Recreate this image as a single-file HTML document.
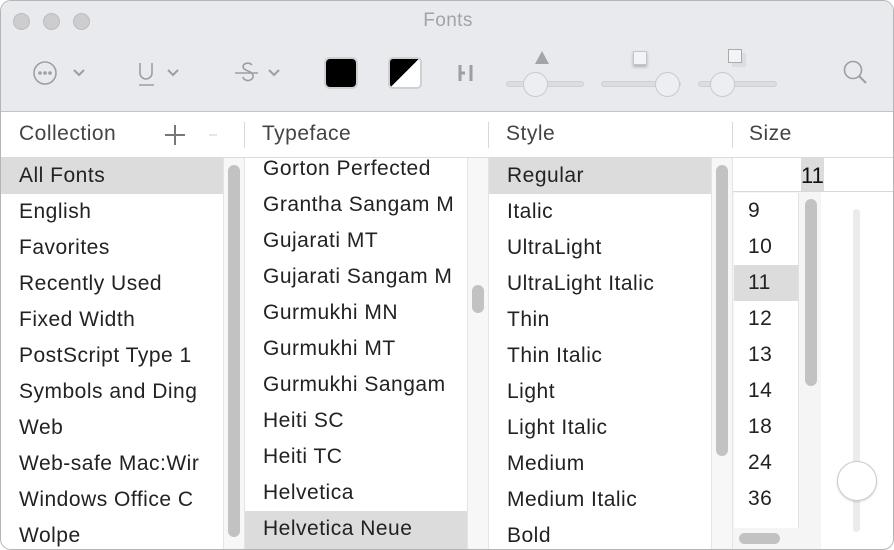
<!DOCTYPE html>
<html><head><meta charset="utf-8"><style>
*{margin:0;padding:0;box-sizing:border-box}
body{width:894px;height:550px;background:#fff;overflow:hidden;font-family:"Liberation Sans",Helvetica,Arial,sans-serif}
.win{position:absolute;left:0;top:0;width:894px;height:550px;border:1px solid #b5b5b5;border-radius:11px;overflow:hidden;background:#fff}
.tb{position:absolute;left:0;top:0;width:894px;height:111px;background:#e9eaee;border-bottom:1px solid #c4c4c6}
.tl{position:absolute;top:12px;width:17px;height:17px;border-radius:50%;background:#cdcdcf;border:1px solid #bdbdbf}
.title{position:absolute;left:0;width:894px;top:9px;text-align:center;color:#a3a3a5;font-size:19px;letter-spacing:.4px}
.a{position:absolute}
.hd{position:absolute;top:121px;font-size:21px;letter-spacing:.5px;color:#444}
.sep{position:absolute;top:121px;width:1px;height:26px;background:#d8d8d8}
.list{position:absolute;top:157px;font-size:21px;letter-spacing:.5px;color:#222}
.row{height:36px;line-height:36px;padding-left:18px;white-space:nowrap;overflow:hidden}
.sel{background:#dcdcdc}
.track{position:absolute;top:157px;width:22px;height:393px;background:#f7f7f7;border-left:1px solid #e4e4e4;border-right:1px solid #e4e4e4}
.thumb{position:absolute;width:12px;left:4px;border-radius:6px;background:#c2c2c2}
.knob{position:absolute;border-radius:50%;background:#eceef1;border:1.5px solid #c9cacd}
.strk{position:absolute;height:6px;border-radius:3px;background:#dcdde0;border:1px solid #cfd0d3}
</style></head><body><div class="win">
<div class="tb">
<div class="tl" style="left:12px"></div><div class="tl" style="left:42px"></div><div class="tl" style="left:72px"></div>
<div class="title">Fonts</div>
<svg class="a" style="left:0;top:50px" width="894" height="50" viewBox="0 50 894 50" fill="none" stroke="#9d9ea1" stroke-width="1.6">
<circle cx="44" cy="72" r="11"/><circle cx="39" cy="72" r="1" fill="#9d9ea1"/><circle cx="44" cy="72" r="1" fill="#9d9ea1"/><circle cx="49" cy="72" r="1" fill="#9d9ea1"/>
<path d="M73 69l5 5 5-5M167 69l5 5 5-5M268 69l5 5 5-5" stroke-width="2"/>
<path d="M139 62v10a6 6 0 0 0 12 0v-10"/><path d="M138 84h15"/>
<path d="M251 64a5 4 0 0 0-9 1c0 6 10 4 10 10a5 4 0 0 1-10 1M234 72h23"/>
<path d="M459 64v16M470 64v16M459 72h5" stroke-width="3"/>
<circle cx="852" cy="69" r="8.5"/><path d="M858 75l7 7" stroke-width="2"/>
</svg>
<div class="a" style="left:323px;top:56px;width:34px;height:32px;background:#000;border-radius:6px;border:2px solid #cfd0d3"></div>
<div class="a" style="left:387px;top:56px;width:34px;height:32px;border-radius:5px;border:2px solid #cfd0d3;background:linear-gradient(135deg,#000 50%,#fff 50%)"></div>
<svg class="a" style="left:530px;top:47px" width="22" height="18"><path d="M4 16L11 3 18 16z" fill="#a3a4a7"/></svg>
<div class="strk" style="left:505px;top:80px;width:78px"></div><div class="knob" style="left:522px;top:71px;width:25px;height:25px"></div>
<div class="a" style="left:632px;top:50px;width:14px;height:14px;background:#f4f4f6;border:1px solid #c5c6c9;box-shadow:0 2px 3px rgba(0,0,0,.25)"></div>
<div class="strk" style="left:600px;top:80px;width:80px"></div><div class="knob" style="left:654px;top:71px;width:25px;height:25px"></div>
<div class="a" style="left:731px;top:52px;width:14px;height:14px;background:#dcdde0"></div>
<div class="a" style="left:727px;top:48px;width:14px;height:14px;background:#f4f4f6;border:1.5px solid #a9aaad"></div>
<div class="strk" style="left:697px;top:80px;width:79px"></div><div class="knob" style="left:709px;top:71px;width:25px;height:25px"></div>
</div>
<div class="hd" style="left:18px">Collection</div>
<svg class="a" style="left:162px;top:122px" width="60" height="24" stroke="#777" stroke-width="2"><path d="M12 2v20M2 12h20"/><path d="M46 12h8" stroke="#ccc" stroke-width="1"/></svg>
<div class="sep" style="left:243px"></div><div class="hd" style="left:261px">Typeface</div>
<div class="sep" style="left:487px"></div><div class="hd" style="left:505px">Style</div>
<div class="sep" style="left:731px"></div><div class="hd" style="left:748px">Size</div>
<div class="a" style="left:0;top:156px;width:894px;height:1px;background:#dadada"></div>

<div class="list" style="left:0;width:222px">
<div class="row sel">All Fonts</div><div class="row">English</div><div class="row">Favorites</div><div class="row">Recently Used</div><div class="row">Fixed Width</div><div class="row">PostScript Type 1</div><div class="row">Symbols and Ding</div><div class="row">Web</div><div class="row">Web-safe Mac:Wir</div><div class="row">Windows Office C</div><div class="row">Wolpe</div></div>
<div class="track" style="left:222px"><div class="thumb" style="top:7px;height:372px"></div></div>

<div class="list" style="left:244px;width:210px;top:150px">
<div class="row">Gorton Perfected</div><div class="row">Grantha Sangam M</div><div class="row">Gujarati MT</div><div class="row">Gujarati Sangam M</div><div class="row">Gurmukhi MN</div><div class="row">Gurmukhi MT</div><div class="row">Gurmukhi Sangam</div><div class="row">Heiti SC</div><div class="row">Heiti TC</div><div class="row">Helvetica</div></div>
<div class="a sel" style="left:244px;top:510px;width:222px;height:40px"></div>
<div class="list" style="left:244px;width:222px;top:510px"><div class="row">Helvetica Neue</div></div>
<div class="a" style="left:244px;top:156px;width:222px;height:1px;background:#dadada"></div>
<div class="track" style="left:466px"><div class="thumb" style="top:127px;height:28px"></div></div>

<div class="list" style="left:488px;width:222px">
<div class="row sel">Regular</div><div class="row">Italic</div><div class="row">UltraLight</div><div class="row">UltraLight Italic</div><div class="row">Thin</div><div class="row">Thin Italic</div><div class="row">Light</div><div class="row">Light Italic</div><div class="row">Medium</div><div class="row">Medium Italic</div><div class="row">Bold</div></div>
<div class="track" style="left:710px"><div class="thumb" style="top:7px;height:291px"></div></div>

<div class="a" style="left:732px;top:157px;width:162px;height:34px;border-bottom:1px solid #d8d8d8"></div>
<div class="a" style="left:800px;top:157px;width:23px;height:33px;background:#dcdcdc;font-size:22px;line-height:36px;color:#111">11</div>
<div class="a" style="left:732px;top:191px;width:88px;height:359px;background:#f5f5f5"></div>
<div class="list" style="left:733px;top:192px;width:65px;height:335px;background:#fff;overflow:hidden;border-right:1px solid #e2e2e2">
<div class="row" style="padding-left:14px">9</div><div class="row" style="padding-left:14px">10</div><div class="row sel" style="padding-left:14px">11</div><div class="row" style="padding-left:14px">12</div><div class="row" style="padding-left:14px">13</div><div class="row" style="padding-left:14px">14</div><div class="row" style="padding-left:14px">18</div><div class="row" style="padding-left:14px">24</div><div class="row" style="padding-left:14px">36</div></div>
<div class="a" style="left:804px;top:198px;width:12px;height:187px;border-radius:6px;background:#c2c2c2"></div>
<div class="a" style="left:738px;top:532px;width:41px;height:11px;border-radius:6px;background:#c2c2c2"></div>
<div class="a" style="left:852px;top:208px;width:7px;height:323px;border-radius:4px;background:#ebebeb"></div>
<div class="a" style="left:836px;top:460px;width:40px;height:40px;border-radius:50%;background:#fff;border:1px solid #ccc;box-shadow:0 1px 2px rgba(0,0,0,.15)"></div>
</div></body></html>
